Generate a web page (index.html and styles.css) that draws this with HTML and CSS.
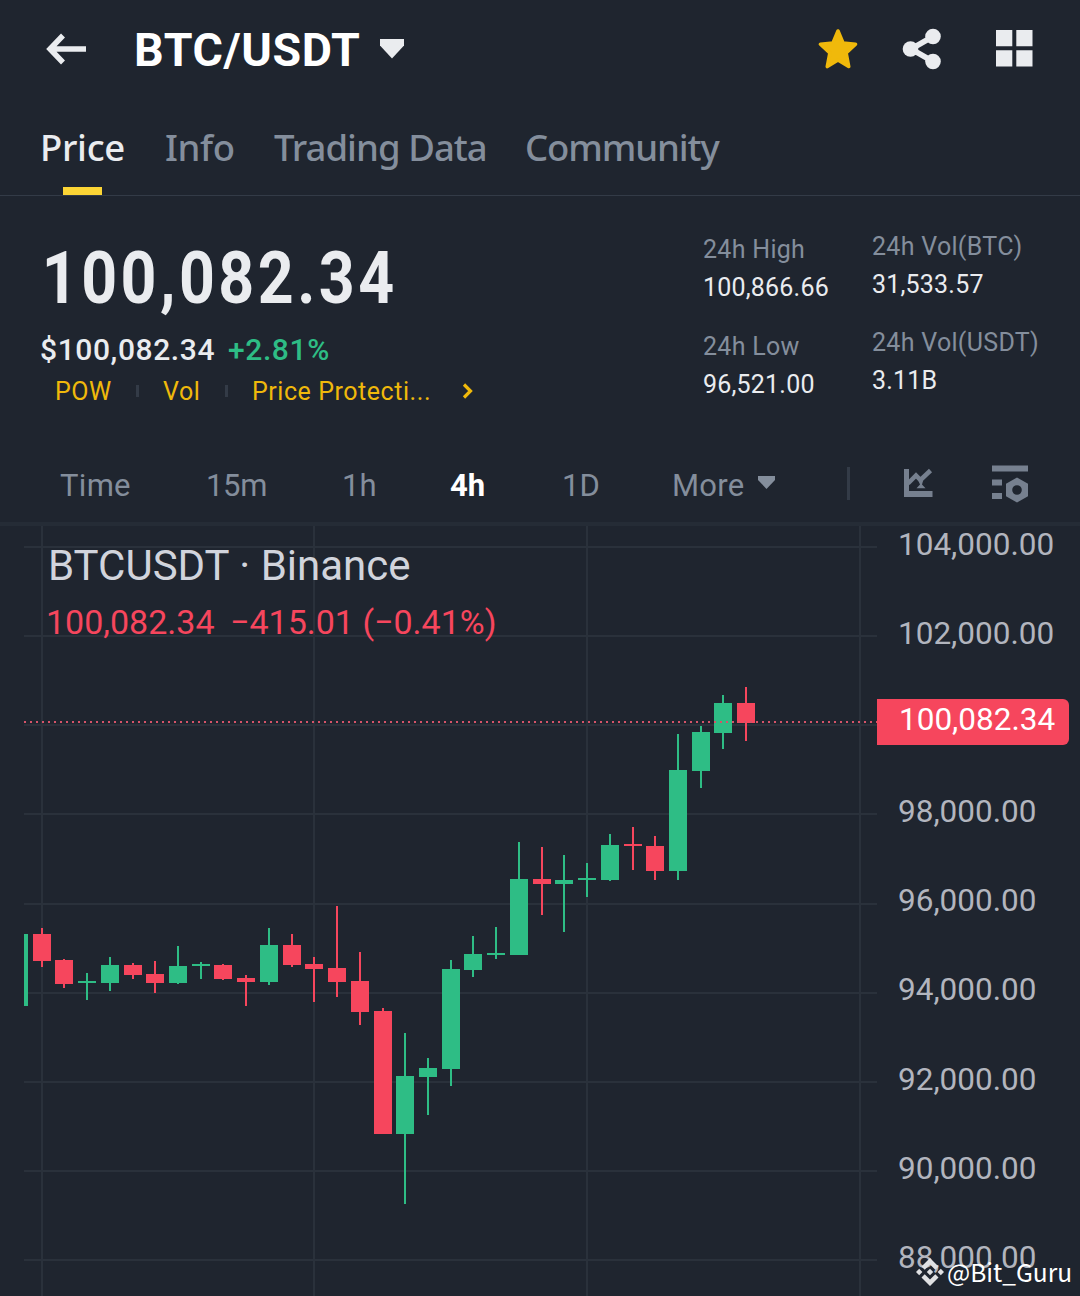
FILE: index.html
```html
<!DOCTYPE html>
<html lang="en">
<head>
<meta charset="utf-8">
<title>BTC/USDT</title>
<link rel="stylesheet" href="styles.css">
</head>
<body>
<header class="topbar">
  <svg class="back" width="40" height="32" viewBox="0 0 40 32"><path d="M17 2.500 4 16l13 13.500M4 16h36" fill="none" stroke="#eaecef" stroke-width="5.500"/></svg>
  <h1 class="pair">BTC/USDT</h1>
  <svg class="pair-caret" width="24" height="20" viewBox="0 0 24 20"><path d="M0 0h24v6.500L12 19.500 0 6.500z" fill="#eaecef"/></svg>
  <div class="actions">
    <svg width="40" height="42" viewBox="0 0 40 42"><path d="M20 3l5 12 12.500 1.200-9.400 8.600 2.600 13.700L20 32 9.300 38.500l2.600-13.700L2.500 16.200 15 15z" fill="#f0b90b" stroke="#f0b90b" stroke-width="3.600" stroke-linejoin="round"/></svg>
    <svg width="40" height="42" viewBox="0 0 40 42"><path d="M31 8.500 9 21l22 12.500" fill="none" stroke="#eaecef" stroke-width="5.500"/><circle cx="31" cy="8.500" r="7.800" fill="#eaecef"/><circle cx="8.500" cy="21" r="7.800" fill="#eaecef"/><circle cx="31" cy="33.500" r="7.800" fill="#eaecef"/></svg>
    <svg width="37" height="37" viewBox="0 0 37 37"><path d="M0 0h16.300v16.300H0zM20.300 0h16.200v16.300H20.300zM0 20.300h16.300v16.200H0zM20.300 20.300h16.200v16.200H20.300z" fill="#eaecef"/></svg>
  </div>
</header>
<nav class="tabs">
  <a class="tab tab-active">Price</a><a class="tab tab-info">Info</a><a class="tab tab-trading">Trading Data</a><a class="tab tab-community">Community</a>
</nav>
<section class="summary">
  <div class="quote">
    <div class="last">100,082.34</div>
    <div class="fiat"><span class="usd">$100,082.34</span><span class="change">+2.81%</span></div>
    <div class="tags"><span class="tag-pow">POW</span><i></i><span class="tag-vol">Vol</span><i></i><span class="tag-protect">Price Protecti...</span>
      <svg width="11" height="16" viewBox="0 0 11 16"><path d="M2 1.500 8.500 8 2 14.500" fill="none" stroke="#f0b90b" stroke-width="3.200"/></svg></div>
  </div>
  <div class="stats stats-range">
    <div class="label">24h High</div><div class="value">100,866.66</div>
    <div class="label">24h Low</div><div class="value">96,521.00</div>
  </div>
  <div class="stats stats-volume">
    <div class="label">24h Vol(BTC)</div><div class="value">31,533.57</div>
    <div class="label">24h Vol(USDT)</div><div class="value">3.11B</div>
  </div>
</section>
<div class="intervals">
  <span class="iv-time">Time</span><span class="iv-15m">15m</span><span class="iv-1h">1h</span><span class="iv-4h">4h</span><span class="iv-1d">1D</span><span class="iv-more">More</span>
  <svg class="more-caret" width="17" height="13" viewBox="0 0 17 13"><path d="M0 0h17v4L8.500 13 0 4z" fill="#848e9c"/></svg>
  <i class="divider"></i>
  <svg class="iv-chart" width="29" height="30" viewBox="0 0 29 30"><path d="M0 1h5v22h23.500v6H0z" fill="#76808f"/><path d="M4 15.500 12 7.500l4.500 4.500L26.500 2.500" fill="none" stroke="#76808f" stroke-width="4.500"/><path d="M14.500 13h4.500l-1 3.500 3.500 3.800h-9l3.500-3.800z" fill="#76808f"/></svg>
  <svg class="iv-settings" width="36" height="38" viewBox="0 0 36 38"><path d="M0 .5h36v6H0zM0 14.500h10v6H0zM0 28h10v6H0z" fill="#76808f"/><path fill-rule="evenodd" d="M25 12.500l11 6.200v12.600l-11 6.200-11-6.200V18.700zM25 20.200a4.800 4.800 0 1 0 0 9.600 4.800 4.800 0 0 0 0-9.600z" fill="#76808f"/></svg>
</div>
<main class="chart">
  <svg class="plot" width="877" height="774" viewBox="0 522 877 774" shape-rendering="crispEdges">
    <path class="grid" d="M42 522V1296M314 522V1296M587 522V1296M860 522V1296M24 547H877M24 636H877M24 725H877M24 814H877M24 904H877M24 993H877M24 1082H877M24 1171H877M24 1260H877"/>
    <path class="up" d="M24 934h4v72h-4zM86 973h2v27h-2zM78 981h18v2h-18zM109 957h2v34h-2zM101 965h18v18h-18zM177 946h2v38h-2zM169 966h18v17h-18zM200 962h2v17h-2zM192 964h18v2h-18zM268 928h2v57h-2zM260 945h18v37h-18zM404 1033h2v171h-2zM396 1076h18v58h-18zM427 1058h2v57h-2zM419 1068h18v9h-18zM450 960h2v126h-2zM442 969h18v100h-18zM472 936h2v41h-2zM464 954h18v16h-18zM495 927h2v32h-2zM487 953h18v2h-18zM518 842h2v113h-2zM510 879h18v76h-18zM563 855h2v77h-2zM555 880h18v4h-18zM586 863h2v34h-2zM578 878h18v2h-18zM609 834h2v47h-2zM601 845h18v35h-18zM677 734h2v146h-2zM669 770h18v101h-18zM700 726h2v62h-2zM692 732h18v39h-18zM722 695h2v54h-2zM714 703h18v30h-18z"/>
    <path class="down" d="M41 928h2v39h-2zM33 934h18v27h-18zM63 959h2v29h-2zM55 960h18v24h-18zM132 963h2v16h-2zM124 965h18v10h-18zM154 961h2v32h-2zM146 974h18v9h-18zM222 964h2v16h-2zM214 965h18v14h-18zM245 975h2v31h-2zM237 978h18v4h-18zM291 934h2v33h-2zM283 945h18v20h-18zM313 957h2v45h-2zM305 964h18v5h-18zM336 906h2v91h-2zM328 968h18v14h-18zM359 952h2v73h-2zM351 981h18v31h-18zM382 1008h2v126h-2zM374 1011h18v123h-18zM541 847h2v68h-2zM533 879h18v5h-18zM632 827h2v43h-2zM624 844h18v2h-18zM654 836h2v44h-2zM646 846h18v25h-18zM745 687h2v54h-2zM737 703h18v20h-18z"/>
    <path class="price-line" d="M24 722H877"/>
  </svg>
  <div class="axis">
    <span>104,000.00</span><span>102,000.00</span><span></span><span>98,000.00</span><span>96,000.00</span><span>94,000.00</span><span>92,000.00</span><span>90,000.00</span><span>88,000.00</span>
  </div>
  <div class="legend">
    <div class="symbol">BTCUSDT · Binance</div>
    <div class="legend-values"><span class="lv-price">100,082.34</span><span class="lv-diff">−415.01 (−0.41%)</span></div>
  </div>
  <div class="price-tag">100,082.34</div>
  <div class="watermark">
    <svg width="28" height="28" viewBox="0 0 28 28" fill="#e0e1e3"><path d="M14 0l8.500 8.500-3.200 3.200L14 6.400l-5.300 5.300-3.200-3.200zM3.200 10.800 6.400 14l-3.200 3.200L0 14zM24.800 10.800 28 14l-3.200 3.200-3.200-3.200zM14 10.800l3.200 3.200-3.200 3.200-3.200-3.200zM8.700 16.300l5.300 5.300 5.300-5.300 3.200 3.200L14 28l-8.500-8.500z"/></svg>
    <span>@Bit_Guru</span>
  </div>
</main>
</body>
</html>
```
FILE: styles.css
```css
* { box-sizing: border-box; }
body {
  margin: 0;
  width: 1080px;
  height: 1296px;
  overflow: hidden;
  background: #1f252f;
  color: #eaecef;
  font-family: Roboto, sans-serif;
  white-space: nowrap;
}
svg { display: block; flex: none; }

.topbar { display: flex; height: 98px; padding-left: 46px; align-items: center; }
.pair { margin: 2px 0 0 48px; width: 226px; font-size: 46.5px; line-height: 56px; font-weight: 700; letter-spacing: .6px; color: #fff; }
.pair-caret { margin-left: 20px; }
.actions { display: flex; align-items: center; gap: 44px; margin-left: 414px; }
.actions svg:last-child { margin: -1px 0 0 10px; }

.tabs { display: flex; height: 98px; border-bottom: 1px solid #333b47; font-family: "Noto Sans", sans-serif; font-size: 36.5px; font-weight: 500; line-height: 98px; color: #848e9c; }
.tab { flex: none; position: relative; }
.tab-active { margin-left: 40px; width: 125px; color: #eaecef; letter-spacing: -.3px; }
.tab-active::after { content: ""; position: absolute; left: 23px; bottom: 0; width: 39px; height: 8px; background: #fcd535; }
.tab-info { width: 109px; letter-spacing: -.4px; }
.tab-trading { width: 251px; letter-spacing: -.95px; }
.tab-community { letter-spacing: -1.1px; }

.summary { display: flex; height: 252px; }
.quote { width: 703px; padding: 40px 0 0 40px; }
.last { height: 86px; padding-left: 2px; font-size: 72px; line-height: 86px; font-weight: 700; letter-spacing: 4px; transform: scaleX(.87); transform-origin: 0 50%; }
.fiat { display: flex; height: 44px; margin-top: 6px; font-size: 30px; line-height: 43px; font-weight: 500; letter-spacing: .6px; }
.usd { width: 188px; }
.change { color: #2ebd85; }
.tags { display: flex; align-items: center; height: 38px; padding-left: 15px; font-size: 25px; letter-spacing: .55px; color: #f0b90b; }
.tags i { width: 3px; height: 12px; background: #333b47; }
.tag-pow { width: 81px; }
.tag-vol { margin-left: 24px; width: 62px; }
.tag-protect { margin-left: 24px; width: 210px; }
.stats { font-size: 25px; line-height: 30px; letter-spacing: .2px; }
.stats-range { width: 169px; padding-top: 39px; }
.stats-volume { padding-top: 36px; }
.label { height: 38px; color: #848e9c; letter-spacing: .3px; }
.value { height: 59px; }
.stats-volume .value { height: 58px; }

.intervals { display: flex; align-items: center; height: 74px; padding-left: 60px; font-size: 31px; color: #848e9c; }
.intervals span { flex: none; }
.iv-time { width: 146px; letter-spacing: .3px; }
.iv-15m { width: 136px; letter-spacing: -.3px; }
.iv-1h { width: 108px; }
.iv-4h { width: 112px; color: #fff; font-weight: 700; }
.iv-1d { width: 110px; }
.iv-more { width: 86px; letter-spacing: .3px; }
.more-caret { margin-top: -6px; }
.divider { width: 3px; height: 33px; margin: -4px 0 0 72px; background: #333b47; }
.iv-chart { margin: -5px 0 0 54px; }
.iv-settings { margin: -3px 0 0 59px; }

.chart { position: relative; display: flex; height: 774px; }
.chart::before { content: ""; position: absolute; left: 0; top: 0; width: 1080px; height: 4px; background: #252c36; }
.grid { stroke: #2a313b; stroke-width: 2; }
.up { fill: #2ebd85; }
.down { fill: #f6465d; }
.price-line { stroke: #d65469; stroke-width: 2; stroke-dasharray: 2 4; }
.axis { display: flex; flex-direction: column; padding: 1px 0 0 21px; font-size: 31.5px; line-height: 44px; color: #b2b5be; }
.axis span { flex: none; height: 89.1px; }
.legend { position: absolute; left: 46px; top: 18px; }
.symbol { height: 52px; padding-left: 2px; font-size: 42px; line-height: 52px; color: #d1d4dc; }
.legend-values { display: flex; height: 60px; font-size: 34px; line-height: 60px; color: #f6465d; }
.lv-price { width: 184px; }
.price-tag { position: absolute; left: 877px; top: 177px; width: 192px; height: 46px; padding-left: 22px; border-radius: 0 6px 6px 0; background: #f6465d; color: #fff; font-size: 31.5px; line-height: 42px; }
.watermark { position: absolute; left: 916px; top: 732px; display: flex; align-items: center; gap: 3px; height: 36px; font-family: "Noto Sans CJK SC", sans-serif; font-size: 24.5px; line-height: 34px; color: #fff; }
.watermark span { margin-top: -1px; }
```
